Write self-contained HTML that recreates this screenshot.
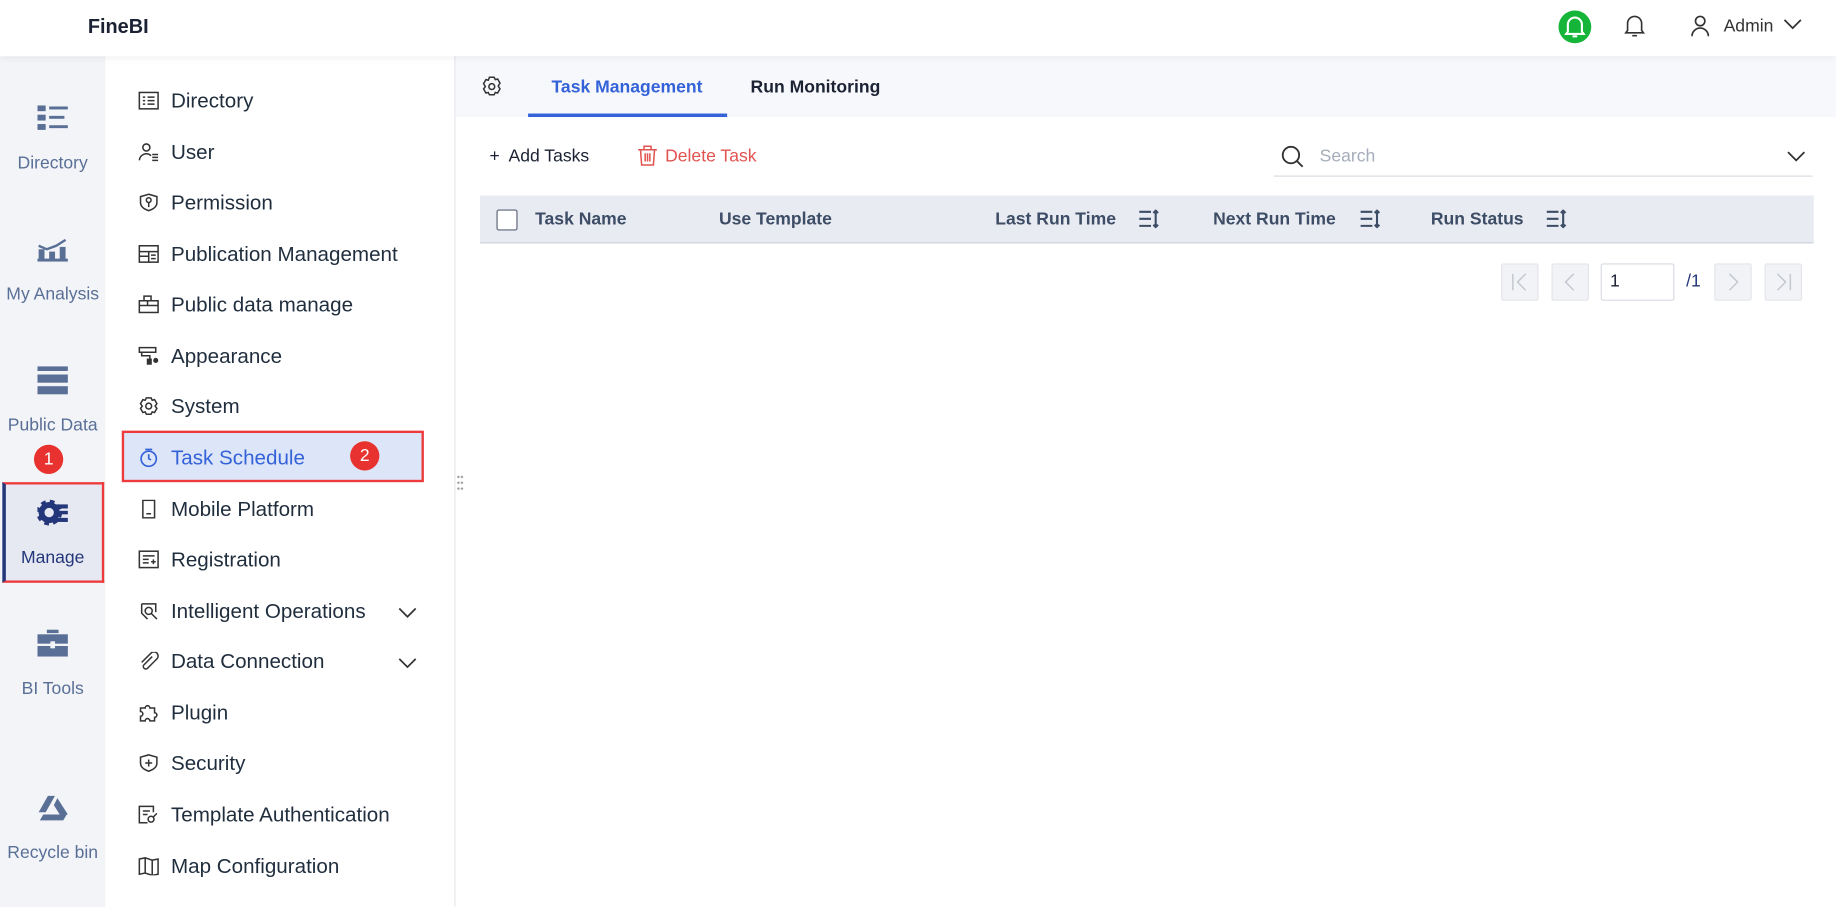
<!DOCTYPE html>
<html><head><meta charset="utf-8"><style>
*{box-sizing:border-box;margin:0;padding:0}
html,body{width:1836px;height:907px;overflow:hidden;background:#fff;font-family:"Liberation Sans",sans-serif}
#w{width:1568px;height:775px;position:relative;transform:scale(1.17092,1.1703);transform-origin:0 0}
.a{position:absolute}
.top{left:0;top:0;width:1568px;height:48px;background:#fff;box-shadow:0 2px 6px rgba(0,0,0,.06);z-index:2}
.rail{left:0;top:48px;width:90px;height:727px;background:#f2f4f8}
.ri{position:absolute;left:0;width:90px;text-align:center;font-size:15px;color:#5a6f96}
.side{left:90px;top:48px;width:299px;height:727px;background:#fff;border-right:1px solid #e6e8ee}
.mi{position:absolute;left:28px;font-size:17.6px;color:#1f2d3d;height:24px;line-height:24px}
.mi svg{position:absolute;left:0;top:4px}
.mi span{position:absolute;left:28px;white-space:nowrap}
.badge{position:absolute;width:25px;height:25px;border-radius:50%;background:#e8322f;color:#fff;font-size:15px;text-align:center;line-height:25px}
.th{position:absolute;top:179px;font-size:15px;font-weight:bold;color:#3d4d66}
.pb{position:absolute;top:225px;width:32px;height:32px;background:#f2f3f6;border:1px solid #e3e5ea;border-radius:2px}
</style></head><body><div id="w">
<div class="a top">
 <div class="a" style="left:75px;top:13px;font-size:17px;font-weight:bold;color:#1a2233">FineBI</div>
 <div class="a" style="left:1331px;top:9px;width:28px;height:28px;border-radius:50%;background:#15b539"></div>
 <svg class="a" style="left:1336px;top:13px" width="18" height="20" viewBox="0 0 18 20" fill="none" stroke="#fff" stroke-width="1.8"><path d="M3 14V8a6 6 0 0112 0v6l1.5 2h-15z M7 18h4"/></svg>
 <svg class="a" style="left:1387px;top:12px" width="18" height="20" viewBox="0 0 18 20" fill="none" stroke="#333" stroke-width="1.4"><path d="M3 14V8a6 6 0 0112 0v6l1.5 2h-15z M7 18.5h4"/></svg>
 <svg class="a" style="left:1443px;top:12px" width="18" height="20" viewBox="0 0 18 20" fill="none" stroke="#333" stroke-width="1.4"><circle cx="9" cy="6" r="4"/><path d="M2 19a7 7 0 0114 0"/></svg>
 <div class="a" style="left:1472px;top:14px;font-size:15px;color:#333">Admin</div>
 <svg class="a" style="left:1523px;top:16px" width="16" height="10" viewBox="0 0 16 10" fill="none" stroke="#333" stroke-width="1.5"><path d="M1 1l7 7 7-7"/></svg>
</div>
<div class="a rail">
 <div class="ri" style="top:42px"><svg width="26" height="22" viewBox="0 0 26 22" fill="#5a6f96"><rect x="0" y="0" width="7" height="5"/><rect x="10" y="1" width="16" height="2.5"/><rect x="0" y="8" width="7" height="5"/><rect x="10" y="9" width="13" height="2.5"/><rect x="0" y="16" width="7" height="5"/><rect x="10" y="17" width="16" height="2.5"/></svg><div style="margin-top:15px">Directory</div></div>
 <div class="ri" style="top:154px"><svg width="26" height="22" viewBox="0 0 26 22"><path d="M1 8l7 3 8-3 8-5" stroke="#5a6f96" stroke-width="2" fill="none"/><rect x="1" y="11" width="5" height="9" fill="#5a6f96"/><rect x="10" y="13" width="5" height="7" fill="#5a6f96"/><rect x="19" y="9" width="5" height="11" fill="#5a6f96"/><rect x="0" y="19" width="26" height="2.5" fill="#5a6f96"/></svg><div style="margin-top:15px">My Analysis</div></div>
 <div class="ri" style="top:265px"><svg width="26" height="24" viewBox="0 0 26 24" fill="#5a6f96"><rect x="0" y="0" width="26" height="4"/><rect x="0" y="7" width="26" height="7"/><rect x="0" y="17" width="26" height="7"/></svg><div style="margin-top:14px">Public Data</div></div>
 <div class="badge" style="left:29px;top:332px">1</div>
 <div class="a" style="left:2px;top:364px;width:87px;height:86px;background:#e6e9f2;border:2px solid #ee3a3a;border-left:3px solid #24377a"></div>
 <div class="ri" style="top:378px;color:#24377a"><svg width="26" height="24" viewBox="0 0 26 24"><circle cx="10" cy="12" r="6.5" fill="none" stroke="#24377a" stroke-width="5"/><circle cx="10" cy="12" r="9.5" fill="none" stroke="#24377a" stroke-width="3" stroke-dasharray="4 3.5"/><rect x="14" y="5" width="12" height="3.5" fill="#24377a"/><rect x="16" y="10.5" width="10" height="3" fill="#24377a"/><rect x="14" y="16.5" width="12" height="3.5" fill="#24377a"/></svg><div style="margin-top:14px">Manage</div></div>
 <div class="ri" style="top:490px"><svg width="26" height="24" viewBox="0 0 26 24" fill="#5a6f96"><rect x="8" y="0" width="10" height="3"/><rect x="0" y="4" width="26" height="8"/><rect x="0" y="14" width="26" height="9"/><rect x="11" y="10" width="4" height="6" fill="#f2f4f8"/></svg><div style="margin-top:14px">BI Tools</div></div>
 <div class="ri" style="top:632px"><svg width="28" height="22" viewBox="0 0 28 22" fill="#5a6f96"><path d="M10 0h6l-8 14H2z"/><path d="M18 2l9 14h-7l-5-8z"/><path d="M6 16h20l-3 5H3z"/></svg><div style="margin-top:14px">Recycle bin</div></div>
</div>
<div class="a side">
 <div class="a" style="left:14px;top:320px;width:258px;height:44px;background:#dde5f8;border:2px solid #ee3a3a"></div>
 <div class="mi" style="top:26px"><svg width="18" height="16" viewBox="0 0 18 16" fill="none" stroke="#333" stroke-width="1.3"><rect x="1" y="1" width="16" height="14"/><path d="M4 5h2M8 5h6M4 8h2M8 8h6M4 11h2M8 11h6"/></svg><span>Directory</span></div>
 <div class="mi" style="top:70px"><svg width="18" height="16" viewBox="0 0 18 16" fill="none" stroke="#333" stroke-width="1.3"><circle cx="7" cy="4" r="3"/><path d="M1 15a6 6 0 0110-4M12 10h5M12 12.5h5M12 15h5"/></svg><span>User</span></div>
 <div class="mi" style="top:113px"><svg width="18" height="16" viewBox="0 0 18 16" fill="none" stroke="#333" stroke-width="1.3"><path d="M9 1l7 2v5c0 4-4 6-7 7-3-1-7-3-7-7V3z"/><circle cx="9" cy="6" r="2"/><path d="M9 8v4"/></svg><span>Permission</span></div>
 <div class="mi" style="top:157px"><svg width="18" height="16" viewBox="0 0 18 16" fill="none" stroke="#333" stroke-width="1.3"><rect x="1" y="1" width="16" height="14"/><path d="M1 6h16M9 6v9M11 9h4M11 12h4M1 10h8"/></svg><span>Publication Management</span></div>
 <div class="mi" style="top:200px"><svg width="18" height="16" viewBox="0 0 18 16" fill="none" stroke="#333" stroke-width="1.3"><rect x="1" y="5" width="16" height="10"/><path d="M5 5V1h6v4M1 9h16M8 5v4"/></svg><span>Public data manage</span></div>
 <div class="mi" style="top:244px"><svg width="18" height="16" viewBox="0 0 18 16" fill="none" stroke="#333" stroke-width="1.3"><path d="M1 1h14v4H1zM3 5v3h7v3"/><rect x="8" y="11" width="3" height="4" fill="#333"/><circle cx="15" cy="12" r="1.5" fill="#333"/></svg><span>Appearance</span></div>
 <div class="mi" style="top:287px"><svg width="18" height="16" viewBox="0 0 18 16" fill="none" stroke="#333" stroke-width="1.3"><path d="M7 1h4l1 2 2-.5 2 3.5-1.5 2 1.5 2-2 3.5-2-.5-1 2H7l-1-2-2 .5-2-3.5L3.5 8 2 6l2-3.5 2 .5z"/><circle cx="9" cy="8" r="2.5"/></svg><span>System</span></div>
 <div class="mi" style="top:331px;color:#3462d8"><svg width="18" height="16" viewBox="0 0 18 16" fill="none" stroke="#3462d8" stroke-width="1.4"><circle cx="9" cy="9" r="6.5"/><path d="M6 1h6M9 5v4l2 1"/></svg><span>Task Schedule</span></div>
 <div class="badge" style="left:209px;top:329px">2</div>
 <div class="mi" style="top:375px"><svg width="18" height="16" viewBox="0 0 18 16" fill="none" stroke="#333" stroke-width="1.3"><rect x="4" y="0.5" width="10" height="15"/><path d="M7 12h4"/></svg><span>Mobile Platform</span></div>
 <div class="mi" style="top:418px"><svg width="18" height="16" viewBox="0 0 18 16" fill="none" stroke="#333" stroke-width="1.3"><rect x="1" y="1" width="16" height="14"/><path d="M4 5h10M4 8h5M4 11h5M11 10h4M13 8v4"/></svg><span>Registration</span></div>
 <div class="mi" style="top:462px"><svg width="18" height="16" viewBox="0 0 18 16" fill="none" stroke="#333" stroke-width="1.3"><path d="M3 2h12v7M3 2v8l5 5"/><circle cx="9" cy="8" r="3"/><path d="M11 10l5 5"/></svg><span>Intelligent Operations</span></div>
 <svg class="a" style="left:250px;top:471px" width="16" height="10" viewBox="0 0 16 10" fill="none" stroke="#333" stroke-width="1.5"><path d="M1 1l7 7 7-7"/></svg>
 <div class="mi" style="top:505px"><svg width="18" height="16" viewBox="0 0 18 16" fill="none" stroke="#333" stroke-width="1.3"><path d="M12 4l-7 7a2 2 0 003 3l8-8a3.5 3.5 0 00-5-5L3 9"/></svg><span>Data Connection</span></div>
 <svg class="a" style="left:250px;top:514px" width="16" height="10" viewBox="0 0 16 10" fill="none" stroke="#333" stroke-width="1.5"><path d="M1 1l7 7 7-7"/></svg>
 <div class="mi" style="top:549px"><svg width="18" height="16" viewBox="0 0 18 16" fill="none" stroke="#333" stroke-width="1.3"><path d="M2 4h4a2 2 0 014 0h4v4a2 2 0 010 4v3H10a2 2 0 00-4 0H2v-4a2 2 0 000-4z"/></svg><span>Plugin</span></div>
 <div class="mi" style="top:592px"><svg width="18" height="16" viewBox="0 0 18 16" fill="none" stroke="#333" stroke-width="1.3"><path d="M9 1l7 2v5c0 4-4 6-7 7-3-1-7-3-7-7V3z"/><path d="M9 5v6M6 8h6"/></svg><span>Security</span></div>
 <div class="mi" style="top:636px"><svg width="18" height="16" viewBox="0 0 18 16" fill="none" stroke="#333" stroke-width="1.3"><path d="M13 6V1H1v14h7M4 5h6M4 8h4"/><circle cx="11" cy="12" r="2.5"/><path d="M13 10l3-3"/></svg><span>Template Authentication</span></div>
 <div class="mi" style="top:680px"><svg width="18" height="16" viewBox="0 0 18 16" fill="none" stroke="#333" stroke-width="1.3"><path d="M1 2l5-1 6 2 5-1v13l-5 1-6-2-5 1zM6 1v13M12 3v13"/></svg><span>Map Configuration</span></div>
</div>
<div class="a" style="left:390px;top:405px;width:6px;height:14px;background:radial-gradient(circle,#999 0.8px,transparent 1.2px) 0 0/3px 5px"></div>
<div class="a" style="left:389px;top:48px;width:1179px;height:52px;background:#f7f8fb"></div>
<svg class="a" style="left:411px;top:65px" width="18" height="18" viewBox="0 0 18 18" fill="none" stroke="#333" stroke-width="1.3"><path d="M7 1h4l1 2 2-.5 2 3.5-1.5 2.5 1.5 2.5-2 3.5-2-.5-1 2H7l-1-2-2 .5-2-3.5L3.5 9 2 6.5l2-3.5 2 .5z"/><circle cx="9" cy="9" r="2.5"/></svg>
<div class="a" style="left:471px;top:66px;font-size:15px;font-weight:bold;color:#3462d8">Task Management</div>
<div class="a" style="left:451px;top:97px;width:170px;height:3px;background:#3462d8"></div>
<div class="a" style="left:641px;top:66px;font-size:15px;font-weight:bold;color:#1a2233">Run Monitoring</div>
<div class="a" style="left:418px;top:125px;font-size:15px;color:#1a2233">+&nbsp; Add Tasks</div>
<svg class="a" style="left:544px;top:124px" width="18" height="18" viewBox="0 0 18 18" fill="none" stroke="#e05350" stroke-width="1.3"><path d="M1 4h16M6 4V1h6v3M3 4l1 13h10l1-13M7 7v7M9 7v7M11 7v7"/></svg>
<div class="a" style="left:568px;top:125px;font-size:15px;color:#e05350">Delete Task</div>
<div class="a" style="left:1088px;top:150px;width:460px;height:1px;background:#d8dbe2"></div>
<svg class="a" style="left:1094px;top:124px" width="20" height="20" viewBox="0 0 20 20" fill="none" stroke="#333" stroke-width="1.6"><circle cx="8.5" cy="8.5" r="7"/><path d="M13.5 13.5l5 5"/></svg>
<div class="a" style="left:1127px;top:125px;font-size:15px;color:#a5adba">Search</div>
<svg class="a" style="left:1526px;top:129px" width="16" height="10" viewBox="0 0 16 10" fill="none" stroke="#333" stroke-width="1.5"><path d="M1 1l7 7 7-7"/></svg>
<div class="a" style="left:410px;top:167px;width:1139px;height:41px;background:#e8ebf2;border-bottom:1px solid #cdd1da"></div>
<div class="a" style="left:424px;top:179px;width:18px;height:18px;border:1px solid #5a6478;border-radius:2px;background:#fff"></div>
<div class="th" style="left:457px">Task Name</div>
<div class="th" style="left:614px">Use Template</div>
<div class="th" style="left:850px">Last Run Time</div>
<div class="th" style="left:1036px">Next Run Time</div>
<div class="th" style="left:1222px">Run Status</div>
<svg class="a" style="left:972px;top:179px" width="18" height="16" viewBox="0 0 18 16" fill="none" stroke="#3d4d66" stroke-width="1.8"><path d="M1 2h10M1 8h10M1 14h10M15 1v14M13 3l2-2 2 2M13 13l2 2 2-2"/></svg>
<svg class="a" style="left:1161px;top:179px" width="18" height="16" viewBox="0 0 18 16" fill="none" stroke="#3d4d66" stroke-width="1.8"><path d="M1 2h10M1 8h10M1 14h10M15 1v14M13 3l2-2 2 2M13 13l2 2 2-2"/></svg>
<svg class="a" style="left:1320px;top:179px" width="18" height="16" viewBox="0 0 18 16" fill="none" stroke="#3d4d66" stroke-width="1.8"><path d="M1 2h10M1 8h10M1 14h10M15 1v14M13 3l2-2 2 2M13 13l2 2 2-2"/></svg>
<div class="pb" style="left:1282px"><svg width="30" height="30" viewBox="0 0 30 30" fill="none" stroke="#c4c8d0" stroke-width="1.3"><path d="M9 8v14M20 8l-7 7 7 7"/></svg></div>
<div class="pb" style="left:1325px"><svg width="30" height="30" viewBox="0 0 30 30" fill="none" stroke="#c4c8d0" stroke-width="1.3"><path d="M18 8l-7 7 7 7"/></svg></div>
<div class="a" style="left:1367px;top:225px;width:63px;height:32px;border:1px solid #d8dbe2;border-radius:2px;font-size:15px;color:#1a2233;padding:6px 7px">1</div>
<div class="a" style="left:1440px;top:232px;font-size:15px;color:#24377a">/1</div>
<div class="pb" style="left:1464px"><svg width="30" height="30" viewBox="0 0 30 30" fill="none" stroke="#c4c8d0" stroke-width="1.3"><path d="M12 8l7 7-7 7"/></svg></div>
<div class="pb" style="left:1507px"><svg width="30" height="30" viewBox="0 0 30 30" fill="none" stroke="#c4c8d0" stroke-width="1.3"><path d="M10 8l7 7-7 7M21 8v14"/></svg></div>
</div></body></html>
